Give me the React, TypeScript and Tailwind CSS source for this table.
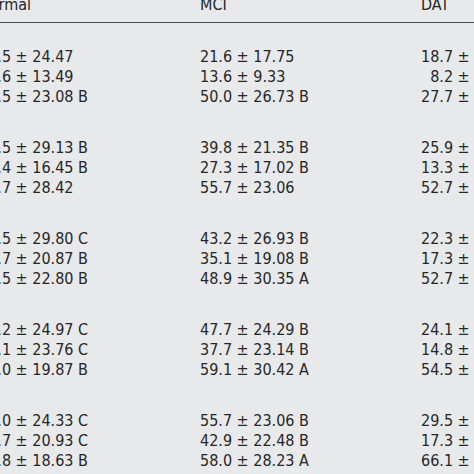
const header = ["Normal", "MCI", "DAT"]

// each group: three rows, each row: [normal, mci, dat]
const groups: string[][][] = [
  [
    ["37.5 ± 24.47", "21.6 ± 17.75", "18.7 ± 15.20"],
    ["14.6 ± 13.49", "13.6 ± 9.33", "\u20078.2 ± 9.86"],
    ["61.5 ± 23.08 B", "50.0 ± 26.73 B", "27.7 ± 24.11 A"],
  ],
  [
    ["48.5 ± 29.13 B", "39.8 ± 21.35 B", "25.9 ± 19.40 A"],
    ["30.4 ± 16.45 B", "27.3 ± 17.02 B", "13.3 ± 12.71 A"],
    ["60.7 ± 28.42", "55.7 ± 23.06", "52.7 ± 25.38"],
  ],
  [
    ["55.5 ± 29.80 C", "43.2 ± 26.93 B", "22.3 ± 20.64 A"],
    ["44.7 ± 20.87 B", "35.1 ± 19.08 B", "17.3 ± 15.92 A"],
    ["63.5 ± 22.80 B", "48.9 ± 30.35 A", "52.7 ± 28.77 A"],
  ],
  [
    ["58.2 ± 24.97 C", "47.7 ± 24.29 B", "24.1 ± 21.03 A"],
    ["49.1 ± 23.76 C", "37.7 ± 23.14 B", "14.8 ± 14.56 A"],
    ["70.0 ± 19.87 B", "59.1 ± 30.42 A", "54.5 ± 27.90 A"],
  ],
  [
    ["67.0 ± 24.33 C", "55.7 ± 23.06 B", "29.5 ± 22.18 A"],
    ["55.7 ± 20.93 C", "42.9 ± 22.48 B", "17.3 ± 16.04 A"],
    ["74.8 ± 18.63 B", "58.0 ± 28.23 A", "66.1 ± 25.47 A"],
  ],
]

export default function App() {
  return (
    <div className="w-[474px] h-[474px] overflow-hidden bg-[#e8e9eb] text-[#262626] font-['DejaVu_Sans_Condensed','DejaVu_Sans',sans-serif] font-stretch-condensed text-[16px] leading-[20px]">
      <div className="-ml-[21px] w-[663px]">
        {/* column heads */}
        <div className="-mt-[5px] h-[28px] border-b-[1.5px] border-[#4d4d4d] grid grid-cols-[221px_221px_221px]">
          {header.map((h) => (
            <div key={h} className="whitespace-nowrap">{h}</div>
          ))}
        </div>

        <div className="pt-[24px] flex flex-col gap-[31px]">
          {groups.map((rows, gi) => (
            <div key={gi} className="flex flex-col">
              {rows.map((row, ri) => (
                <div key={ri} className="h-[20px] grid grid-cols-[221px_221px_221px]">
                  {row.map((cell, ci) => (
                    <div key={ci} className="whitespace-nowrap">{cell}</div>
                  ))}
                </div>
              ))}
            </div>
          ))}
        </div>
      </div>
    </div>
  )
}
